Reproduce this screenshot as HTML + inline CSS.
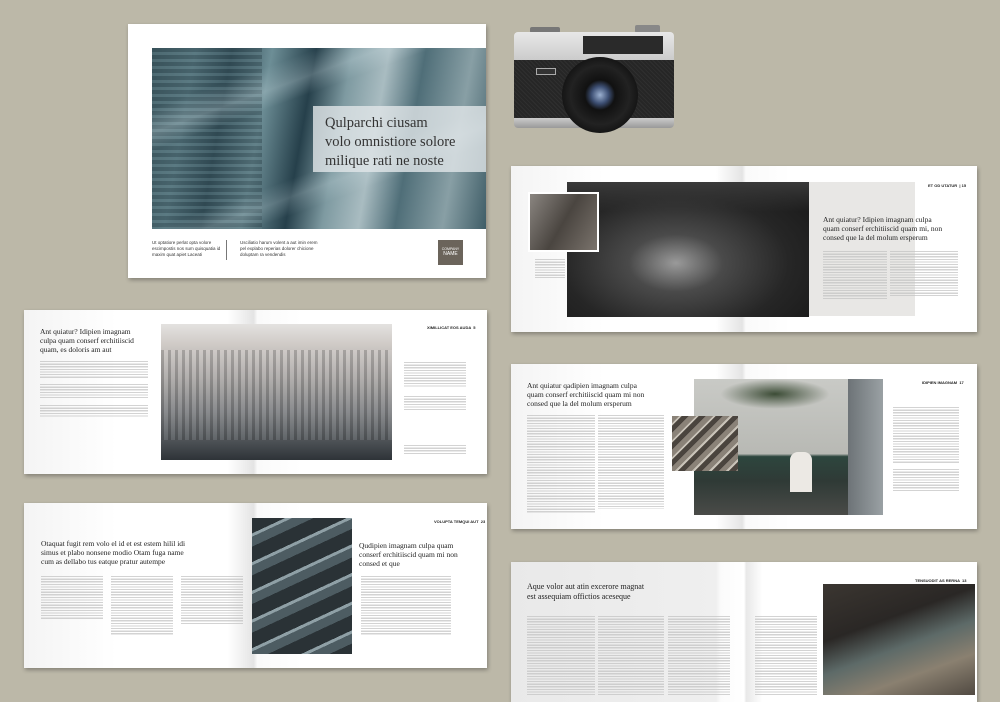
<!DOCTYPE html><html><head><style>
*{margin:0;padding:0;box-sizing:border-box}
body{width:1000px;height:695px;background:#bcb8a8;position:relative;overflow:hidden;font-family:"Liberation Sans",sans-serif}
.a{position:absolute}
.pg{position:absolute;background:#fff;box-shadow:1px 2px 4px rgba(0,0,0,.3)}
.sp{background:linear-gradient(90deg,#f4f4f4 0%,#fff 20%,#fff 44%,#e4e4e4 49.6%,#fafafa 50.4%,#fff 60%,#fff 100%)}
.h{position:absolute;font-family:"Liberation Serif",serif;color:#222;line-height:1.25}
.t{position:absolute;background:repeating-linear-gradient(rgba(255,255,255,0) 0,rgba(255,255,255,0) 1px,#c4c4c4 1px,#c4c4c4 2.2px,rgba(255,255,255,0) 2.2px,rgba(255,255,255,0) 2.6px);opacity:.75}
.hd{position:absolute;font-size:4px;font-weight:bold;color:#222}
</style></head><body>

<!-- cover -->
<div class="pg" style="left:128px;top:24px;width:358px;height:254px"></div>
<div class="a" style="left:152px;top:48px;width:334px;height:181px;background:linear-gradient(100deg,#3f5b63 0%,#5e7f88 12%,#2f4a55 22%,#6d8e96 33%,#26404b 45%,#7e9aa1 55%,#a9bcc1 65%,#4f6e78 75%,#889fa5 88%,#3f5d67 100%)"></div>
<div class="a" style="left:152px;top:48px;width:110px;height:181px;background:repeating-linear-gradient(#30474f 0,#30474f 4px,#58757d 4px,#58757d 7px);opacity:.5"></div>
<div class="a" style="left:152px;top:48px;width:334px;height:181px;background:linear-gradient(160deg,rgba(255,255,255,0) 20%,rgba(220,235,240,.25) 28%,rgba(255,255,255,0) 34%,rgba(255,255,255,0) 60%,rgba(220,235,240,.2) 66%,rgba(255,255,255,0) 72%)"></div>
<div class="a" style="left:313px;top:106px;width:173px;height:66px;background:rgba(225,230,232,.8)"></div>
<div class="h" style="left:325px;top:114px;font-size:14.5px;line-height:19px;color:#333">Qulparchi ciusam<br>volo omnistiore solore<br>milique rati ne noste</div>
<div class="a" style="left:152px;top:240px;font-size:4.5px;line-height:6px;color:#333">Ut optatiore perlat opta volore<br>escimpostis nos sum quisquatia id<br>maxim quat apiet Laceati</div>
<div class="a" style="left:226px;top:240px;width:1px;height:20px;background:#777"></div>
<div class="a" style="left:240px;top:240px;font-size:4.5px;line-height:6px;color:#333">Usciliatio harum volent a aut imin erem<br>pel explabo reperias dolorer chicione<br>doluptam ra vendendis</div>
<div class="a" style="left:438px;top:240px;width:25px;height:25px;background:#6b645b;color:#fff;font-size:3.5px;text-align:center;padding-top:7px;line-height:5px">COMPANY<br><span style="font-size:5px">NAME</span></div>

<!-- camera -->
<div class="a" style="left:530px;top:27px;width:30px;height:6px;background:#777;border-radius:2px"></div>
<div class="a" style="left:635px;top:25px;width:25px;height:8px;background:#888;border-radius:2px"></div>
<div class="a" style="left:514px;top:32px;width:160px;height:30px;background:linear-gradient(#e8e8e8,#c9c9c9);border-radius:4px 4px 0 0"></div>
<div class="a" style="left:583px;top:36px;width:80px;height:18px;background:#2a2a2a"></div>
<div class="a" style="left:514px;top:60px;width:160px;height:60px;background:repeating-linear-gradient(45deg,#262626 0,#262626 2px,#2f2f2f 2px,#2f2f2f 3px)"></div>
<div class="a" style="left:514px;top:118px;width:160px;height:10px;background:linear-gradient(#ccc,#9a9a9a);border-radius:0 0 4px 4px"></div>
<div class="a" style="left:536px;top:68px;width:20px;height:7px;border:1px solid #aaa;background:#333"></div>
<div class="a" style="left:562px;top:57px;width:76px;height:76px;border-radius:50%;background:radial-gradient(circle,#9bb0d0 0,#3d4f73 16%,#111 28%,#222 55%,#0c0c0c 82%,#aaa 86%,#ddd 92%,#777 100%)"></div>

<!-- top-right spread -->
<div class="pg sp" style="left:511px;top:166px;width:466px;height:166px"></div>
<div class="a" style="left:567px;top:182px;width:242px;height:135px;background:radial-gradient(ellipse at 45% 60%,#9a9a9a 0,#4a4a4a 25%,#262626 60%,#161616 100%)"></div>
<div class="a" style="left:567px;top:182px;width:242px;height:30px;background:linear-gradient(#3a3a3a,rgba(0,0,0,0))"></div>
<div class="a" style="left:528px;top:192px;width:71px;height:60px;background:linear-gradient(120deg,#8a8580,#4a4540 50%,#7a736c);border:2px solid #fff"></div>
<div class="a" style="left:809px;top:182px;width:106px;height:134px;background:#e8e7e5"></div>
<div class="hd" style="left:928px;top:183px">ET OD UTATUR &nbsp;| 15</div>
<div class="h" style="left:823px;top:215px;font-size:7.5px;line-height:9px">Ant quiatur? Idipien imagnam culpa<br>quam conserf erchitiiscid quam mi, non<br>consed que la del molum ersperum</div>
<div class="t" style="left:823px;top:250px;width:64px;height:50px"></div>
<div class="t" style="left:890px;top:250px;width:68px;height:46px"></div>
<div class="t" style="left:535px;top:258px;width:30px;height:20px"></div>

<!-- mid-right spread -->
<div class="pg sp" style="left:511px;top:364px;width:466px;height:165px"></div>
<div class="h" style="left:527px;top:381px;font-size:7.5px;line-height:9px">Ant quiatur qadipien imagnam culpa<br>quam conserf erchitiiscid quam mi non<br>consed que la del molum ersperum</div>
<div class="t" style="left:527px;top:414px;width:68px;height:100px"></div>
<div class="t" style="left:598px;top:414px;width:66px;height:95px"></div>
<div class="a" style="left:694px;top:379px;width:189px;height:136px;background:linear-gradient(#c9cac6 0,#b8b9b4 55%,#2d463e 57%,#2f3a36 75%,#4a4b48 100%)"></div>
<div class="a" style="left:720px;top:379px;width:110px;height:30px;background:radial-gradient(ellipse,#3c4c36,rgba(60,76,54,0) 70%)"></div>
<div class="a" style="left:848px;top:379px;width:35px;height:136px;background:linear-gradient(90deg,#6d7377,#9aa1a4)"></div>
<div class="a" style="left:790px;top:452px;width:22px;height:40px;background:#ece9e4;border-radius:8px 8px 0 0"></div>
<div class="a" style="left:672px;top:416px;width:66px;height:55px;background:repeating-linear-gradient(135deg,#8a8278 0,#8a8278 5px,#c8c2b8 5px,#c8c2b8 7px,#4a443e 7px,#4a443e 12px)"></div>
<div class="hd" style="left:922px;top:380px">IDIPIEN IMAGNAM &nbsp;17</div>
<div class="t" style="left:893px;top:406px;width:66px;height:58px"></div>
<div class="t" style="left:893px;top:468px;width:66px;height:24px"></div>

<!-- bottom-right spread -->
<div class="pg" style="left:511px;top:562px;width:466px;height:140px;background:linear-gradient(90deg,#e9e9e9 0%,#efefef 44%,#fbfbfb 45%,#fff 50%,#e8e8e8 50.5%,#fff 54%,#fff 100%)"></div>
<div class="h" style="left:527px;top:582px;font-size:8px;line-height:10px">Aque volor aut atin excerore magnat<br>est assequiam offictios aceseque</div>
<div class="t" style="left:527px;top:615px;width:68px;height:80px"></div>
<div class="t" style="left:598px;top:615px;width:66px;height:80px"></div>
<div class="t" style="left:668px;top:615px;width:62px;height:80px"></div>
<div class="t" style="left:755px;top:615px;width:62px;height:80px"></div>
<div class="hd" style="left:915px;top:578px">TENSUODIT AS RERNA &nbsp;13</div>
<div class="a" style="left:823px;top:584px;width:152px;height:111px;background:linear-gradient(160deg,#3b3631 0,#2a2725 35%,#5d6a68 55%,#8a8070 75%,#514a42 100%)"></div>

<!-- left top spread -->
<div class="pg sp" style="left:24px;top:310px;width:463px;height:164px"></div>
<div class="h" style="left:40px;top:327px;font-size:7.5px;line-height:9px">Ant quiatur? Idipien imagnam<br>culpa quam conserf erchitiiscid<br>quam, es doloris am aut</div>
<div class="t" style="left:40px;top:360px;width:108px;height:18px"></div>
<div class="t" style="left:40px;top:383px;width:108px;height:15px"></div>
<div class="t" style="left:40px;top:404px;width:108px;height:14px"></div>
<div class="a" style="left:161px;top:324px;width:231px;height:136px;background:linear-gradient(#e4e2e0 0,#cfcac6 15%,#a9a6a4 40%,#7b7d80 65%,#4f5458 85%,#2e3338 100%)"></div>
<div class="a" style="left:161px;top:350px;width:231px;height:90px;background:repeating-linear-gradient(90deg,rgba(60,60,60,.25) 0,rgba(60,60,60,.25) 3px,rgba(255,255,255,.1) 3px,rgba(255,255,255,.1) 7px)"></div>
<div class="hd" style="left:427px;top:325px">XIMILLICAT EOS AUDA &nbsp;5</div>
<div class="t" style="left:404px;top:361px;width:62px;height:26px"></div>
<div class="t" style="left:404px;top:395px;width:62px;height:16px"></div>
<div class="t" style="left:404px;top:444px;width:62px;height:11px"></div>

<!-- left bottom spread -->
<div class="pg sp" style="left:24px;top:503px;width:463px;height:165px"></div>
<div class="h" style="left:41px;top:539px;font-size:7.5px;line-height:9px">Otaquat fugit rem volo el id et est estem hilil idi<br>simus et plabo nonsene modio Otam fuga name<br>cum as dellabo tus eatque pratur autempe</div>
<div class="t" style="left:41px;top:575px;width:62px;height:45px"></div>
<div class="t" style="left:111px;top:575px;width:62px;height:60px"></div>
<div class="t" style="left:181px;top:575px;width:62px;height:50px"></div>
<div class="a" style="left:252px;top:518px;width:100px;height:136px;background:repeating-linear-gradient(155deg,#2a3236 0,#2a3236 14px,#8fa0a6 14px,#8fa0a6 17px,#4d5c62 17px,#4d5c62 26px)"></div>
<div class="hd" style="left:434px;top:519px">VOLUPTA TEMQUI AUT &nbsp;23</div>
<div class="h" style="left:359px;top:541px;font-size:7.5px;line-height:9px">Qudipien imagnam culpa quam<br>conserf erchitiiscid quam mi non<br>consed et que</div>
<div class="t" style="left:361px;top:575px;width:90px;height:60px"></div>

</body></html>
